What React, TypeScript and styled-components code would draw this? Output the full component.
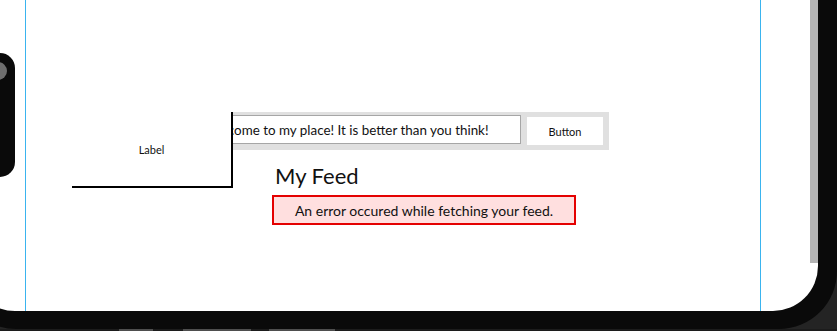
import React from "react";
import styled, { createGlobalStyle } from "styled-components";

const Global = createGlobalStyle`
  html, body { margin: 0; padding: 0; background: #242424; overflow: hidden; }
  * { box-sizing: border-box; }
`;

const Stage = styled.div`
  width: 837px;
  height: 331px;
  overflow: hidden;
  background: #242424;
  display: flex;
  flex-direction: column;
  font-family: Lato, "Noto Sans", sans-serif;
  color: #111111;
`;

const Device = styled.div`
  flex: none;
  margin: -40px 0 0 -42px;
  width: 879px;
  height: 369px;
  padding: 18px 19px 18px 12px;
  background: #0a0a0a;
  border-radius: 0 0 58px 58px;
  display: flex;
`;

const Screen = styled.div`
  position: relative;
  flex: 1;
  display: flex;
  background: #ffffff;
  border-radius: 0 0 45px 45px;
  overflow: hidden;
`;

const Viewport = styled.div`
  flex: 1;
  display: flex;
`;

const SafeArea = styled.div`
  position: relative;
  margin-left: 55px;
  width: 736px;
  border-left: 1px solid #3ab4ef;
  border-right: 1px solid #3ab4ef;
  padding-top: 134px;
  display: flex;
  flex-direction: column;
`;

const SearchBar = styled.div`
  display: flex;
  align-items: flex-start;
  gap: 6px;
  margin-left: 143px;
  width: 440px;
  height: 38px;
  padding: 3px 6px 0 3px;
  background: #e0e0e0;
`;

const TextBox = styled.div`
  width: 349px;
  height: 29px;
  display: flex;
  align-items: center;
  justify-content: center;
  white-space: nowrap;
  background: #ffffff;
  border: 1px solid #a6a6a6;
  font-size: 13.4px;
`;

const Button = styled.div`
  width: 76px;
  height: 28px;
  margin-top: 2px;
  display: flex;
  align-items: center;
  justify-content: center;
  background: #ffffff;
  font-size: 11px;
`;

const Feed = styled.div`
  display: flex;
  flex-direction: column;
  align-items: flex-start;
  margin-left: 246px;
`;

const Heading = styled.div`
  margin: 13.5px 0 0 3px;
  height: 24px;
  font-size: 22px;
  line-height: 24px;
`;

const ErrorBox = styled.div`
  margin-top: 7.5px;
  width: 304px;
  height: 30px;
  display: flex;
  align-items: center;
  justify-content: center;
  background: #ffdfdf;
  border: 2px solid #e40000;
  font-size: 14px;
`;

const LabelBox = styled.div`
  position: absolute;
  left: 46px;
  top: 134px;
  width: 161px;
  height: 76px;
  display: flex;
  align-items: center;
  justify-content: center;
  background: #ffffff;
  border-right: 2px solid #000;
  border-bottom: 2px solid #000;
  font-size: 11px;
`;

const ScrollTrack = styled.div`
  width: 8px;
  display: flex;
  flex-direction: column;
`;

const Thumb = styled.div`
  height: 285px;
  background: #b4b4b4;
`;

const Notch = styled.div`
  position: absolute;
  left: 15px;
  top: 75px;
  width: 30px;
  height: 124px;
  border-radius: 15px;
  background: #0a0a0a;
`;

const Camera = styled.div`
  position: absolute;
  left: 4px;
  top: 9px;
  width: 18px;
  height: 18px;
  border-radius: 50%;
  background: #6e6e6e;
`;

const Strip = styled.div`
  flex: none;
  height: 2px;
  display: flex;
  background: #1c1c1c;
`;

const Segment = styled.div<{ $ml: number; $w: number }>`
  margin-left: ${(p) => p.$ml}px;
  width: ${(p) => p.$w}px;
  background: #4e4e4e;
`;

export default function App() {
  return (
    <Stage>
      <Global />
      <Device>
        <Screen>
          <Viewport>
            <SafeArea>
              <SearchBar>
                <TextBox>Welcome to my place! It is better than you think!</TextBox>
                <Button>Button</Button>
              </SearchBar>
              <Feed>
                <Heading>My Feed</Heading>
                <ErrorBox>An error occured while fetching your feed.</ErrorBox>
              </Feed>
              <LabelBox>Label</LabelBox>
            </SafeArea>
          </Viewport>
          <ScrollTrack>
            <Thumb />
          </ScrollTrack>
          <Notch>
            <Camera />
          </Notch>
        </Screen>
      </Device>
      <Strip>
        <Segment $ml={119} $w={34} />
        <Segment $ml={30} $w={68} />
        <Segment $ml={18} $w={66} />
      </Strip>
    </Stage>
  );
}
